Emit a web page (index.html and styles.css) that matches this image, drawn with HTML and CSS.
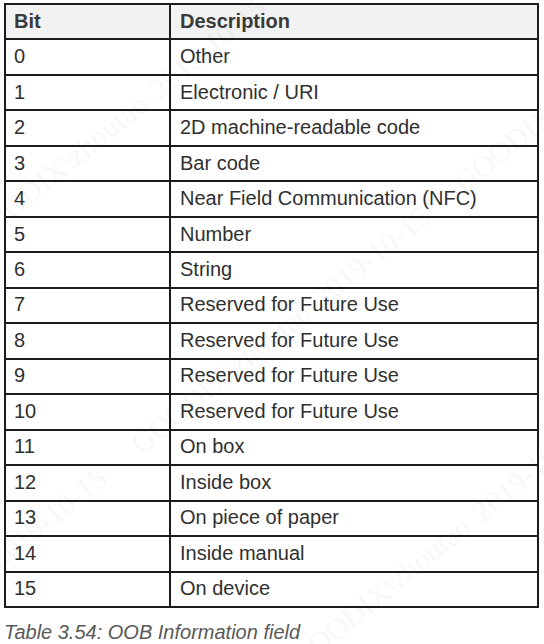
FILE: index.html
```html
<!DOCTYPE html>
<html>
<head>
<meta charset="utf-8">
<title>OOB Information field</title>
<link rel="stylesheet" href="styles.css">
</head>
<body>
<div class="page">
  <table class="oob">
    <thead>
      <tr><th class="bit">Bit</th><th>Description</th></tr>
    </thead>
    <tbody>
      <tr><td class="bit">0</td><td>Other</td></tr>
      <tr><td class="bit">1</td><td>Electronic / URI</td></tr>
      <tr><td class="bit">2</td><td>2D machine-readable code</td></tr>
      <tr><td class="bit">3</td><td>Bar code</td></tr>
      <tr><td class="bit">4</td><td>Near Field Communication (NFC)</td></tr>
      <tr><td class="bit">5</td><td>Number</td></tr>
      <tr><td class="bit">6</td><td>String</td></tr>
      <tr><td class="bit">7</td><td>Reserved for Future Use</td></tr>
      <tr><td class="bit">8</td><td>Reserved for Future Use</td></tr>
      <tr><td class="bit">9</td><td>Reserved for Future Use</td></tr>
      <tr><td class="bit">10</td><td>Reserved for Future Use</td></tr>
      <tr><td class="bit">11</td><td>On box</td></tr>
      <tr><td class="bit">12</td><td>Inside box</td></tr>
      <tr><td class="bit">13</td><td>On piece of paper</td></tr>
      <tr><td class="bit">14</td><td>Inside manual</td></tr>
      <tr><td class="bit">15</td><td>On device</td></tr>
    </tbody>
  </table>
  <p class="caption">Table 3.54: OOB Information field</p>
  <div class="watermark" aria-hidden="true">
    <div class="wm wm-a"><span class="wm-n">GOODIX\zhoutao</span><span class="wm-d">2019-10-15</span><span class="wm-n">GOODIX\zhoutao</span></div>
    <div class="wm wm-b"><span class="wm-d">2019-10-15</span><span class="wm-n">GOODIX\zhoutao</span><span class="wm-d">2019-10-15</span><span class="wm-n">GOODIX\zhoutao</span></div>
    <div class="wm wm-c"><span class="wm-n">GOODIX\zhoutao</span><span class="wm-d">2019-10-15</span></div>
  </div>
</div>
</body>
</html>
```
FILE: styles.css
```css
html, body {
  margin: 0;
  padding: 0;
  background: #ffffff;
}

.page {
  position: relative;
  width: 544px;
  height: 644px;
  overflow: hidden;
  padding: 3px 0 0 4px;
  box-sizing: border-box;
  font-family: "Liberation Sans", Arial, sans-serif;
  color: #303030;
}

.oob {
  width: 535px;
  border-collapse: collapse;
  border: 2px solid #1c1c1c;
  font-size: 20px;
}

.oob th,
.oob td {
  border: 2px solid #1c1c1c;
  height: 31.47px;
  padding: 0 0 2px 9px;
  text-align: left;
  vertical-align: middle;
  line-height: 22px;
}

.oob th {
  background: #f2f2f2;
  font-weight: bold;
  color: #3a3a3a;
}

.oob .bit {
  width: 155px;
  padding-left: 8px;
}

.caption {
  margin: 12px 0 0 0;
  font-style: italic;
  font-size: 20px;
  line-height: 24px;
  color: #595959;
}

.watermark {
  position: absolute;
  left: 0;
  top: 0;
  width: 544px;
  height: 644px;
  overflow: hidden;
  pointer-events: none;
}

.wm {
  position: absolute;
  white-space: nowrap;
  font-family: "Liberation Serif", "Times New Roman", serif;
  font-size: 30px;
  line-height: 30px;
  color: rgba(0, 0, 0, 0.05);
  transform-origin: 0 25px;
  transform: rotate(-39deg);
}

.wm-n { margin-right: 12px; }
.wm-d { margin-right: 42px; }

.wm-a { left: -22px; top: 222px; }
.wm-b { left: 0; top: 545px; }
.wm-c { left: 301px; top: 645px; }
```
